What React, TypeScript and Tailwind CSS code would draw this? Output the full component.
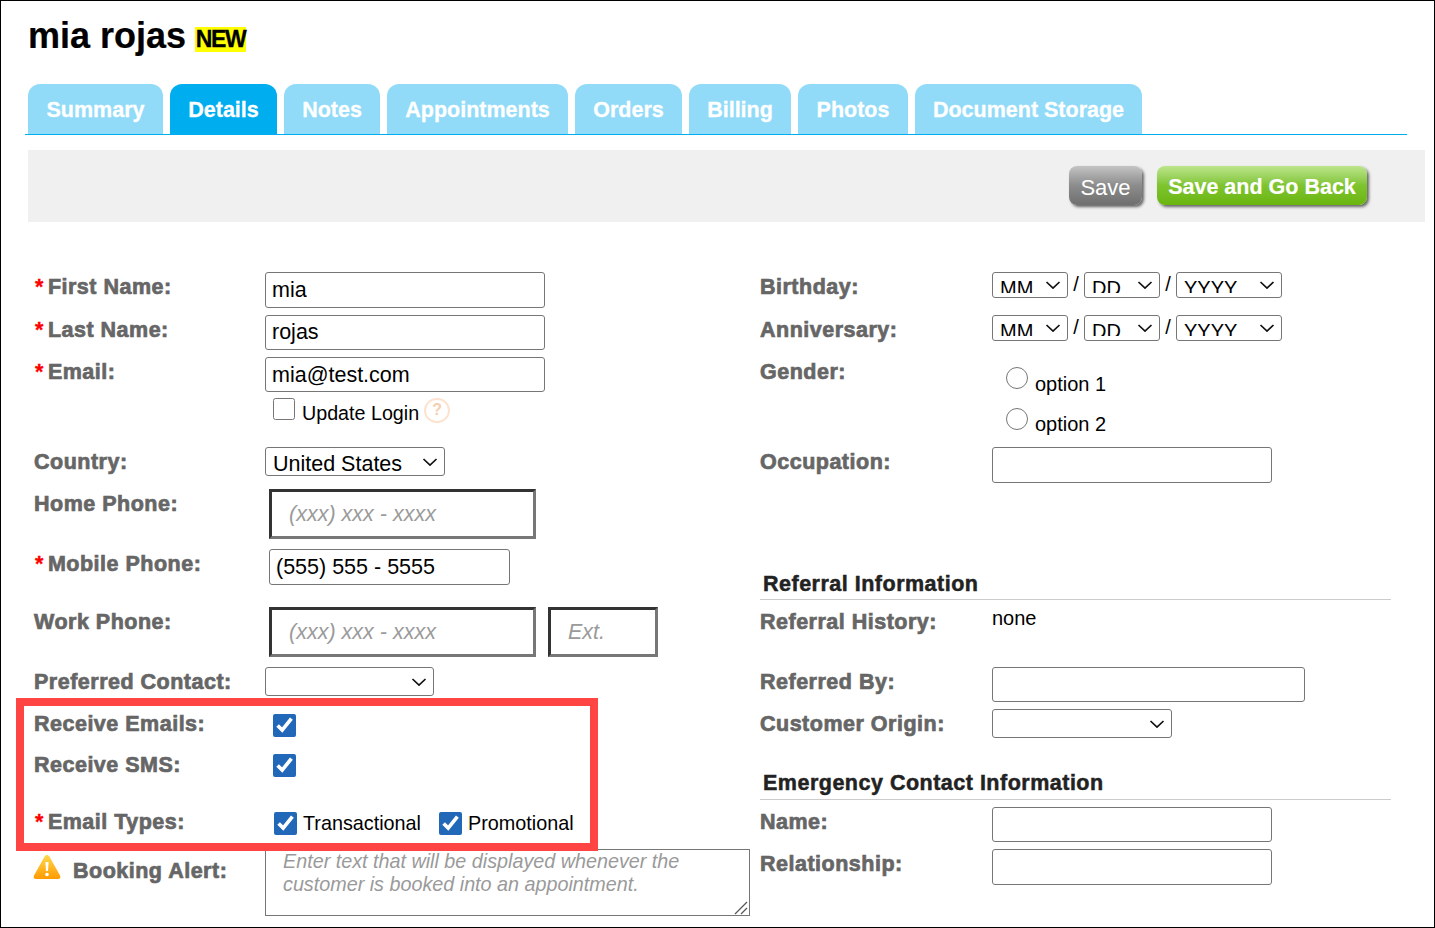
import React from "react";

const font = "font-['Liberation_Sans',Arial,sans-serif]";
const labelCls =
  "text-[21.5px] font-bold text-[#666666] leading-[24px] tracking-[0.5px] [-webkit-text-stroke:0.7px_#666666] whitespace-nowrap";
const inputCls =
  "block bg-white border border-[#767676] rounded-[3px] text-[21.5px] text-black px-[6px] outline-none";
const phoneCls =
  "block bg-white border-[3px] border-t-[#333333] border-l-[#333333] border-r-[#777777] border-b-[#777777] text-[21.5px] italic text-black px-[17px] outline-none placeholder:text-[#9a9a9a]";
const headCls =
  "w-[631px] border-b border-[#cccccc] pl-[3px] text-[21.5px] font-bold text-[#222222] tracking-[0.5px] [-webkit-text-stroke:0.5px_#222]";

const tabs = [
  { t: "Summary", w: "w-[135px]" },
  { t: "Details", w: "w-[107px]", on: true },
  { t: "Notes", w: "w-[96px]" },
  { t: "Appointments", w: "w-[181px]" },
  { t: "Orders", w: "w-[107px]" },
  { t: "Billing", w: "w-[102px]" },
  { t: "Photos", w: "w-[110px]" },
  { t: "Document Storage", w: "w-[227px]" },
];

function Label({ children, req, className = "" }: { children: React.ReactNode; req?: boolean; className?: string }) {
  return (
    <div className={`${labelCls} ${className}`}>
      {req && <span className="text-[#ff0000] [-webkit-text-stroke:0.3px_#ff0000] ml-[1px] mr-[4px]">*</span>}
      {children}
    </div>
  );
}

function Select({ value, className, size = "text-[21.5px]" }: { value: string; className: string; size?: string }) {
  return (
    <div className={`relative shrink-0 ${className}`}>
      <select className={`appearance-none block w-full h-full bg-white border border-[#767676] rounded-[3px] ${size} text-black pl-[7px] pb-[4px] outline-none`}>
        <option>{value}</option>
      </select>
      <svg width="16" height="9" viewBox="0 0 16 9" className="absolute right-[7px] top-1/2 -translate-y-1/2 pointer-events-none">
        <path d="M1.5 1.5 L8 7.5 L14.5 1.5" fill="none" stroke="#111" strokeWidth="1.7" />
      </svg>
    </div>
  );
}

function DateSelects() {
  return (
    <div className="flex items-center text-[20px] text-black">
      <Select value="MM" size="text-[20px]" className="w-[76px] h-[26px]" />
      <span className="w-[16px] text-center -mt-[2px]">/</span>
      <Select value="DD" size="text-[20px]" className="w-[76px] h-[26px]" />
      <span className="w-[16px] text-center -mt-[2px]">/</span>
      <Select value="YYYY" size="text-[20px]" className="w-[106px] h-[26px]" />
    </div>
  );
}

function Warning() {
  return (
    <svg width="28" height="26" viewBox="0 0 28 26" className="shrink-0">
      <defs>
        <linearGradient id="warn" x1="0" y1="0" x2="0" y2="1">
          <stop offset="0" stopColor="#ffd84d" />
          <stop offset="1" stopColor="#ff9a00" />
        </linearGradient>
      </defs>
      <path d="M14 1 C15 1 15.8 1.6 16.4 2.6 L27 21.5 C28 23.5 27 25 25 25 L3 25 C1 25 0 23.5 1 21.5 L11.6 2.6 C12.2 1.6 13 1 14 1 Z" fill="url(#warn)" />
      <path d="M12.4 8 H15.6 L15 17 H13 Z" fill="#fff" />
      <circle cx="14" cy="20.5" r="1.8" fill="#fff" />
    </svg>
  );
}

function Help() {
  return (
    <span className="ml-[5px] -mt-[3px] w-[26px] h-[25px] rounded-full border-[2px] border-[#fde3cf] flex items-center justify-center text-[16px] font-bold text-[#f5cfae]">
      ?
    </span>
  );
}

export default function App() {
  return (
    <div className={`${font} relative w-[1435px] h-[928px] bg-white border border-black overflow-hidden box-border`}>
      <div className="flex items-center pl-[27px] pt-[12px] h-[83px] pb-[25px] box-border">
        <h1 className="text-[36px] font-bold leading-[46px] text-black [-webkit-text-stroke:0.2px_#000]">mia rojas</h1>
        <span className="ml-[9px] mt-[7px] bg-[#ffff00] w-[51px] h-[25px] flex items-center justify-center text-[23px] leading-[25px] font-bold text-black tracking-[-1.3px] [-webkit-text-stroke:0.3px_#000]">
          NEW
        </span>
      </div>

      <div className="ml-[24px] w-[1382px] pl-[3px] flex gap-[7px] h-[51px] border-b border-[#00aeef]">
        {tabs.map((x) => (
          <div
            key={x.t}
            className={`${x.w} h-[50px] pt-[2px] rounded-t-[12px] flex items-center justify-center text-[21.5px] font-bold text-white [-webkit-text-stroke:0.3px_#fff] ${
              x.on ? "bg-[#00aeef]" : "bg-[#92dbf8]"
            }`}
          >
            {x.t}
          </div>
        ))}
      </div>

      <div className="ml-[27px] mt-[15px] w-[1397px] h-[72px] bg-[#f0f0f0] flex items-start justify-end pt-[16px] pr-[58px] gap-[15px]">
        <button className="w-[73px] h-[39px] rounded-[8px] pt-[3px] text-[22px] text-white bg-gradient-to-b from-[#c4c4c4] via-[#8c8c8c] to-[#6f6f6f] shadow-[2px_2px_3px_#666]">
          Save
        </button>
        <button className="w-[210px] h-[39px] rounded-[8px] pt-[3px] text-[21.5px] font-bold text-white [-webkit-text-stroke:0.2px_#fff] bg-gradient-to-b from-[#bde58a] via-[#7fc42e] to-[#6ab50c] shadow-[2px_2px_3px_#666]">
          Save and Go Back
        </button>
      </div>

      <div className="flex pt-[50px]">
        {/* left column */}
        <div className="w-[759px] shrink-0 pl-[33px]">
          <div className="flex h-[36px]">
            <Label req className="w-[231px] pt-[3px]">First Name:</Label>
            <input readOnly value="mia" className={`${inputCls} w-[280px] h-[36px]`} />
          </div>
          <div className="flex h-[36px] mt-[7px]">
            <Label req className="w-[231px] pt-[3px]">Last Name:</Label>
            <input readOnly value="rojas" className={`${inputCls} w-[280px] h-[35px]`} />
          </div>
          <div className="flex h-[36px] mt-[6px]">
            <Label req className="w-[231px] pt-[3px]">Email:</Label>
            <input readOnly value="mia@test.com" className={`${inputCls} w-[280px] h-[35px] pt-[2px]`} />
          </div>
          <div className="flex items-center h-[27px] mt-[5px] pl-[239px] text-[19.7px] text-black">
            <input type="checkbox" className="w-[22px] h-[22px] m-0 -mt-[5px] accent-[#2268b8]" />
            <span className="ml-[7px] mt-[4px]">Update Login</span>
            <Help />
          </div>
          <div className="flex h-[29px] mt-[22px]">
            <Label className="w-[231px] pt-[3px]">Country:</Label>
            <Select value="United States" className="w-[180px] h-[29px]" />
          </div>
          <div className="flex h-[50px] mt-[13px]">
            <Label className="w-[235px] pt-[3px]">Home Phone:</Label>
            <input readOnly placeholder="(xxx) xxx - xxxx" className={`${phoneCls} w-[267px] h-[50px]`} />
          </div>
          <div className="flex h-[36px] mt-[10px]">
            <Label req className="w-[235px] pt-[3px]">Mobile Phone:</Label>
            <input readOnly value="(555) 555 - 5555" className={`${inputCls} w-[241px] h-[36px]`} />
          </div>
          <div className="flex h-[50px] mt-[22px]">
            <Label className="w-[235px] pt-[3px]">Work Phone:</Label>
            <input readOnly placeholder="(xxx) xxx - xxxx" className={`${phoneCls} w-[267px] h-[50px]`} />
            <input readOnly placeholder="Ext." className={`${phoneCls} w-[110px] h-[50px] ml-[12px]`} />
          </div>
          <div className="flex h-[29px] mt-[10px]">
            <Label className="w-[231px] pt-[3px]">Preferred Contact:</Label>
            <Select value="" className="w-[169px] h-[29px]" />
          </div>
          <div className="flex h-[24px] mt-[18px]">
            <Label className="w-[239px] -mt-[2px]">Receive Emails:</Label>
            <input type="checkbox" readOnly checked className="w-[23px] h-[23px] m-0 accent-[#2268b8]" />
          </div>
          <div className="flex h-[24px] mt-[16px]">
            <Label className="w-[239px] -mt-[1px]">Receive SMS:</Label>
            <input type="checkbox" readOnly checked className="w-[23px] h-[23px] m-0 accent-[#2268b8]" />
          </div>
          <div className="flex h-[24px] mt-[34px]">
            <Label req className="w-[240px] -mt-[2px]">Email Types:</Label>
            <input type="checkbox" readOnly checked className="w-[23px] h-[23px] m-0 accent-[#2268b8]" />
            <span className="ml-[6px] text-[19.8px] leading-[22px] text-black">Transactional</span>
            <input type="checkbox" readOnly checked className="w-[23px] h-[23px] m-0 ml-[18px] accent-[#2268b8]" />
            <span className="ml-[6px] text-[19.8px] leading-[22px] text-black">Promotional</span>
          </div>
          <div className="flex mt-[13px]">
            <div className="w-[231px] flex items-start pt-[5px] gap-[12px] -ml-[1px] mr-[1px]">
              <Warning />
              <Label className="pt-[5px]">Booking Alert:</Label>
            </div>
            <div className="relative">
              <textarea
                readOnly
                placeholder="Enter text that will be displayed whenever the customer is booked into an appointment."
                className="block w-[485px] h-[67px] resize-none bg-white border border-[#767676] text-[19.75px] leading-[23px] italic px-[17px] pt-0 outline-none placeholder:text-[#9a9a9a]"
              />
              <svg width="14" height="14" viewBox="0 0 14 14" className="absolute right-[2px] bottom-[1px] pointer-events-none">
                <path d="M1 13 L13 1 M7 13 L13 7" stroke="#555" strokeWidth="1.2" fill="none" />
              </svg>
            </div>
          </div>
        </div>

        {/* right column */}
        <div className="flex-1">
          <div className="flex h-[26px]">
            <Label className="w-[232px] pt-[3px]">Birthday:</Label>
            <DateSelects />
          </div>
          <div className="flex h-[26px] mt-[17px]">
            <Label className="w-[232px] pt-[3px]">Anniversary:</Label>
            <DateSelects />
          </div>
          <div className="flex h-[90px] mt-[16px]">
            <Label className="w-[232px] pt-[3px]">Gender:</Label>
            <div className="pl-[14px] text-[20px] text-black">
              <div className="flex h-[41px] pt-[10px]">
                <input type="radio" name="g" className="w-[22px] h-[22px] m-0" />
                <span className="ml-[7px] mt-[5px] leading-[24px]">option 1</span>
              </div>
              <div className="flex h-[40px] pt-[10px]">
                <input type="radio" name="g" className="w-[22px] h-[22px] m-0" />
                <span className="ml-[7px] mt-[4px] leading-[24px]">option 2</span>
              </div>
            </div>
          </div>
          <div className="flex h-[36px]">
            <Label className="w-[232px] pt-[3px]">Occupation:</Label>
            <input readOnly className={`${inputCls} w-[280px] h-[36px]`} />
          </div>
          <div className={`${headCls} mt-[88px] h-[29px] leading-[26px]`}>Referral Information</div>
          <div className="flex h-[36px] mt-[9px]">
            <Label className="w-[232px] pt-[1px]">Referral History:</Label>
            <span className="text-[20px] leading-[18px] text-black">none</span>
          </div>
          <div className="flex h-[35px] mt-[22px]">
            <Label className="w-[232px] pt-[3px]">Referred By:</Label>
            <input readOnly className={`${inputCls} w-[313px] h-[35px]`} />
          </div>
          <div className="flex h-[29px] mt-[7px]">
            <Label className="w-[232px] pt-[3px]">Customer Origin:</Label>
            <Select value="" className="w-[180px] h-[29px]" />
          </div>
          <div className={`${headCls} mt-[30px] h-[32px] leading-[31px]`}>Emergency Contact Information</div>
          <div className="flex h-[35px] mt-[7px]">
            <Label className="w-[232px] pt-[3px]">Name:</Label>
            <input readOnly className={`${inputCls} w-[280px] h-[35px]`} />
          </div>
          <div className="flex h-[36px] mt-[7px]">
            <Label className="w-[232px] pt-[3px]">Relationship:</Label>
            <input readOnly className={`${inputCls} w-[280px] h-[36px]`} />
          </div>
        </div>
      </div>

      {/* highlight annotation */}
      <div className="absolute left-[15px] top-[697px] w-[582px] h-[153px] border-[8px] border-[#ff4444] pointer-events-none" />
    </div>
  );
}
